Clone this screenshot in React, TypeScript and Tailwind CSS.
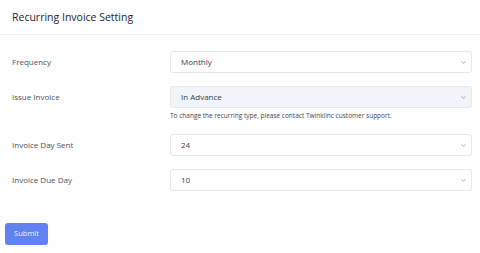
import { ChevronDown } from "lucide-react";

const rows = [
  { label: "Frequency", value: "Monthly", disabled: false, help: "" },
  {
    label: "Issue Invoice",
    value: "In Advance",
    disabled: true,
    help: "To change the recurring type, please contact Twinklinc customer support.",
  },
  { label: "Invoice Day Sent", value: "24", disabled: false, help: "" },
  { label: "Invoice Due Day", value: "10", disabled: false, help: "" },
];

export default function App() {
  return (
    <div className="w-[480px] h-[253px] bg-white text-[#1f2937]" style={{ fontFamily: '"Open Sans", sans-serif' }}>
      <div className="h-[35px] flex items-center px-3 border-b border-[#eef0f4]">
        <h2 className="text-[10.5px] font-medium text-[#1e2430] leading-none">Recurring Invoice Setting</h2>
      </div>

      <div className="pt-4 pr-2 pl-3">
        {rows.map((r) => (
          <div key={r.label} className="flex mb-[13px]">
            <div className="w-[158px] h-[22px] flex items-center text-[8px] text-[#4b5160]">{r.label}</div>
            <div className="flex-1">
              <div
                className={`h-[22px] rounded-[3px] border border-[#e6e8ee] flex items-center justify-between pl-[10px] pr-[4px] text-[8px] text-[#3a404c] ${
                  r.disabled ? "bg-[#f1f4f8]" : "bg-white"
                }`}
              >
                <span>{r.value}</span>
                <ChevronDown className="w-[7px] h-[7px] text-[#6b7280]" strokeWidth={2} />
              </div>
              {r.help && <div className="mt-[3px] text-[6.5px] text-[#3f4550] leading-[10px]">{r.help}</div>}
            </div>
          </div>
        ))}
      </div>

      <div className="pl-[5px] pt-[14px]">
        <button className="w-[43px] h-[22px] rounded-[3px] bg-[#6183f1] text-[7.5px] text-[#eef2ff]">Submit</button>
      </div>
    </div>
  );
}
